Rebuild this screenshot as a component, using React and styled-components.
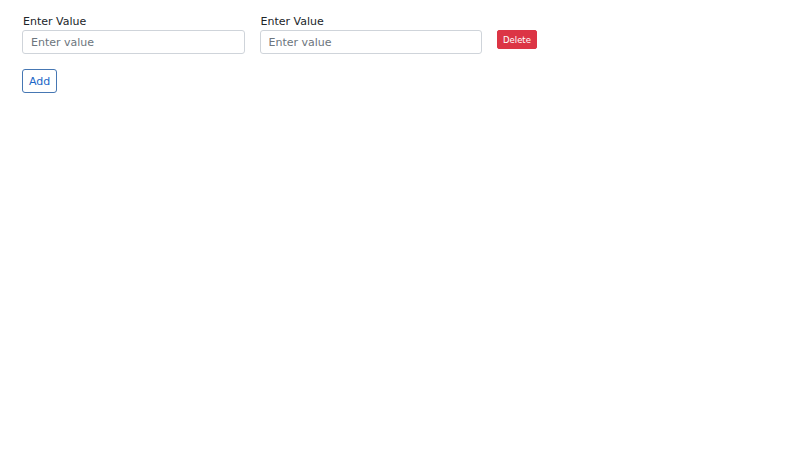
import React, { useState } from "react";
import styled, { createGlobalStyle } from "styled-components";

const GlobalStyle = createGlobalStyle`
    body {
        margin: 0;
        background: #fff;
        font-family: "DejaVu Sans", sans-serif;
        color: #212529;
    }
`;

const Page = styled.div`
    padding: 14px 22px;
    display: flex;
    flex-direction: column;
    gap: 15px;
    align-items: flex-start;
`;

const Row = styled.div`
    display: flex;
    gap: 15px;
    align-items: flex-start;
`;

const Field = styled.div`
    display: flex;
    flex-direction: column;
    width: 222.5px;
`;

const Label = styled.label`
    font-size: 11px;
    line-height: 16px;
    padding-left: 1px;
`;

const Input = styled.input`
    box-sizing: border-box;
    height: 24px;
    width: 100%;
    padding: 0 8px;
    font-family: inherit;
    font-size: 11px;
    color: #212529;
    border: 1px solid #cfd4da;
    border-radius: 3px;
    outline: none;

    &::placeholder {
        color: #6c757d;
    }
`;

const Button = styled.button`
    box-sizing: border-box;
    font-family: inherit;
    cursor: pointer;
    border-radius: ${props => (props.small ? "2px" : "3px")};
    font-size: ${props => (props.small ? "8.5px" : "11px")};
    height: ${props => (props.small ? "19px" : "24px")};
    padding: ${props => (props.small ? "0 5px" : "0 6px")};
    margin-top: ${props => (props.small ? "16px" : "0")};
    color: ${props => (props.danger ? "#fff" : "#1a66c7")};
    background: ${props => (props.danger ? "#dc3545" : "#fff")};
    border: 1px solid ${props => (props.danger ? "#dc3545" : "#4677b3")};
`;

export default function App() {
    const [rows, setRows] = useState([{ a: "", b: "" }]);

    return (
        <>
            <GlobalStyle />
            <Page>
                {rows.map((row, i) => (
                    <Row key={i}>
                        <Field>
                            <Label>Enter Value</Label>
                            <Input placeholder="Enter value" />
                        </Field>
                        <Field>
                            <Label>Enter Value</Label>
                            <Input placeholder="Enter value" />
                        </Field>
                        <Button
                            small
                            danger
                            onClick={() =>
                                setRows(rows.filter((_, j) => j !== i))
                            }
                        >
                            Delete
                        </Button>
                    </Row>
                ))}
                <Button onClick={() => setRows([...rows, { a: "", b: "" }])}>
                    Add
                </Button>
            </Page>
        </>
    );
}
